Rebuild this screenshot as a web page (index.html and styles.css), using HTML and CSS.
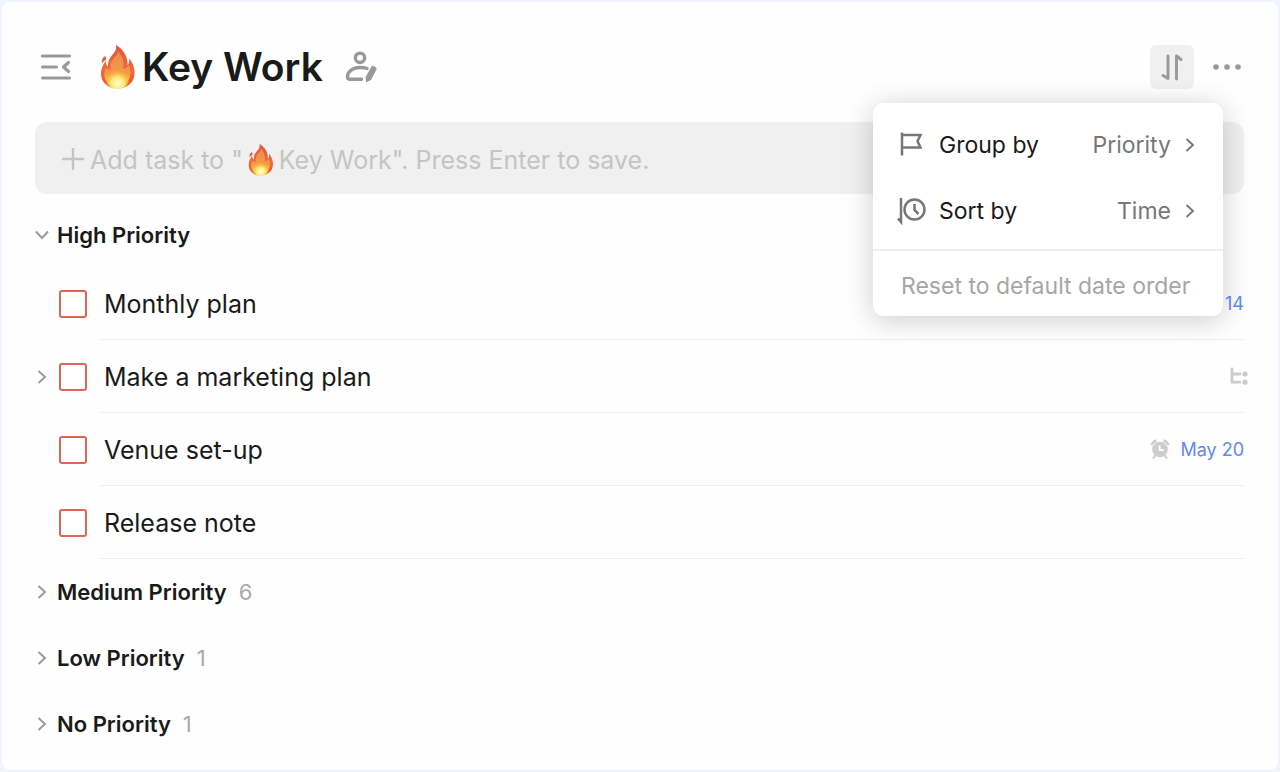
FILE: index.html
```
<!DOCTYPE html>
<html lang="en">
<head>
    <meta charset="UTF-8">
    <meta name="viewport" content="width=device-width, initial-scale=1">
    <title>Key Work</title>
    <link rel="stylesheet" href="styles.css">
</head>
<body>

<!-- Shared icons -->
<svg width="0" height="0" class="sprite" aria-hidden="true">
    <defs>
        <linearGradient id="flame-outer" x1="0" y1="0" x2="0" y2="1">
            <stop offset="0" stop-color="#e8543a"/>
            <stop offset="0.55" stop-color="#ef6a3c"/>
            <stop offset="0.85" stop-color="#ee5a2c"/>
            <stop offset="1" stop-color="#f59a3a"/>
        </linearGradient>
        <linearGradient id="flame-mid" x1="0" y1="0" x2="0" y2="1">
            <stop offset="0" stop-color="#ee8a50"/>
            <stop offset="0.6" stop-color="#f39a45"/>
            <stop offset="1" stop-color="#fbc93f"/>
        </linearGradient>
        <radialGradient id="flame-core" cx="0.5" cy="0.78" r="0.6">
            <stop offset="0" stop-color="#fffde0"/>
            <stop offset="0.45" stop-color="#fdec70"/>
            <stop offset="1" stop-color="#f8b040" stop-opacity="0"/>
        </radialGradient>
        <symbol id="flame" viewBox="0 0 36 44">
            <path fill="url(#flame-outer)" d="M16 0C23 4 28 11 27.500 20C29 18.500 29.500 16 29 13.500C32.500 17 35 23 34.500 29C34 38 27 43.500 17.500 43.500C8 43.500 1 37.500 1 28.500C1 23 3.500 19.500 5.500 16C6 19 6.500 20.500 8 21.500C8 15 10 12.500 13.500 8.500C16 5.500 16.500 3 16 0Z"/>
            <path fill="#ee5e3c" d="M5 11C6.500 12 7 14 5 15.500C3.500 16.700 2.500 17.500 2.500 18.500C1 15.500 2.500 13 5 11Z"/>
            <path fill="url(#flame-mid)" d="M17.500 6C22.500 11 24.500 17 23 23.500C25.500 24 27.500 22.500 28.500 20C30.500 24 31.500 29 29 34C27 39 23 42 17.500 42C11 42 5.500 38 4.500 32C4 28 4.500 25.500 6 23C7.500 24.500 9 25 11 24C9.500 19 12 15 15 12C17 10 18 8 17.500 6Z"/>
            <ellipse fill="url(#flame-core)" cx="17.500" cy="32" rx="12" ry="12"/>
        </symbol>
        <symbol id="chevron" viewBox="0 0 14 14">
            <path d="M3.500 1L10 7L3.500 13" fill="none" stroke="currentColor" stroke-width="1.900"/>
        </symbol>
    </defs>
</svg>

<main class="app">
    <header class="header">
        <button class="icon-btn" type="button" aria-label="Collapse sidebar">
            <svg width="32" height="28" viewBox="0 0 32 28" fill="none" stroke="currentColor" stroke-width="3.100" stroke-linecap="round">
                <path d="M2.500 3H29.500M2.500 14H16.500M2.500 25H29.500"/>
                <path d="M28.500 9.500L23.500 14L28.500 18.500" stroke-linejoin="round"/>
            </svg>
        </button>
        <h1 class="title"><svg class="title-flame"><use href="#flame"/></svg>Key Work</h1>
        <button class="icon-btn" type="button" aria-label="Share list">
            <svg width="32" height="32" viewBox="0 0 32 32" fill="none" stroke="currentColor" stroke-width="3.400" stroke-linejoin="round" stroke-linecap="round">
                <circle cx="15" cy="6.800" r="4.700"/>
                <path d="M22 17.500C20 16.700 18 16.500 15 16.500C8 16.500 2.500 20.500 2.500 25.500C2.500 28 3 28.300 5 28.300H16.500"/>
                <path d="M28.500 15L31 16.500Q32 17.500 31.500 18.500L26 29L21 31.500L20.700 26L26.500 15.500Q27.200 14.300 28.500 15Z" fill="currentColor" stroke="none"/>
            </svg>
        </button>

        <div class="header-actions">
            <div class="sort">
                <button class="sort-btn" type="button" aria-label="Group and sort" aria-expanded="true">
                    <svg width="22" height="28" viewBox="0 0 22 28" fill="none" stroke="currentColor" stroke-width="2.900" stroke-linecap="round" stroke-linejoin="round">
                        <path d="M7 3V25.500L2 22.500M15.500 26V3L20 6.500"/>
                    </svg>
                </button>

                <div class="menu">
                    <button class="menu-item" type="button">
                        <svg class="menu-icon" viewBox="0 0 30 28" fill="none" stroke="currentColor" stroke-width="2.500">
                            <path d="M5 1.500V24.500M5 4H23.500L20.500 10.200L23.500 16.500H5"/>
                        </svg>
                        <span>Group by</span>
                        <span class="menu-value">Priority</span>
                        <svg class="menu-chevron"><use href="#chevron"/></svg>
                    </button>
                    <button class="menu-item" type="button">
                        <svg class="menu-icon" viewBox="0 0 30 28" fill="none" stroke="currentColor" stroke-width="2.500">
                            <path d="M4 1V25L1 21.500"/>
                            <circle cx="17.500" cy="12.500" r="10"/>
                            <path d="M17.500 7V13L21.500 17"/>
                        </svg>
                        <span>Sort by</span>
                        <span class="menu-value">Time</span>
                        <svg class="menu-chevron"><use href="#chevron"/></svg>
                    </button>
                    <button class="menu-item menu-reset" type="button">Reset to default date order</button>
                </div>
            </div>
            <button class="icon-btn" type="button" aria-label="More">
                <svg width="30" height="8" viewBox="0 0 30 8" fill="currentColor">
                    <circle cx="4" cy="4" r="2.800"/><circle cx="15" cy="4" r="2.800"/><circle cx="26" cy="4" r="2.800"/>
                </svg>
            </button>
        </div>
    </header>

    <div class="add-task">
        <input class="add-input" id="new-task" type="text" placeholder=" ">
        <label class="add-hint" for="new-task">
            <svg class="plus" viewBox="0 0 22 22" fill="none" stroke="currentColor" stroke-width="2.400">
                <path d="M0 10H22M11 -1V21"/>
            </svg>
            <span>Add task to "</span>
            <svg class="hint-flame"><use href="#flame"/></svg>
            <span>Key Work". Press Enter to save.</span>
        </label>
    </div>

    <section>
        <button class="group open" type="button" aria-expanded="true">
            <svg class="chevron"><use href="#chevron"/></svg>
            <span>High Priority</span>
        </button>
        <ul class="tasks">
            <li class="task">
                <span class="toggle"></span>
                <input class="check" type="checkbox" id="task-1">
                <div class="task-body">
                    <label for="task-1">Monthly plan</label>
                    <span class="date">14</span>
                </div>
            </li>
            <li class="task">
                <button class="toggle" type="button" aria-label="Show subtasks"><svg class="chevron"><use href="#chevron"/></svg></button>
                <input class="check" type="checkbox" id="task-2">
                <div class="task-body">
                    <label for="task-2">Make a marketing plan</label>
                    <svg class="meta-icon subtasks-icon" viewBox="0 0 20 20" fill="none" stroke="currentColor" stroke-width="2.800" stroke-linecap="round">
                        <path d="M3 3V16.200H11M3 8H11"/>
                        <circle cx="16" cy="8" r="2.600" fill="currentColor" stroke="none"/>
                        <circle cx="16" cy="16.200" r="2.600" fill="currentColor" stroke="none"/>
                    </svg>
                </div>
            </li>
            <li class="task">
                <span class="toggle"></span>
                <input class="check" type="checkbox" id="task-3">
                <div class="task-body">
                    <label for="task-3">Venue set-up</label>
                    <svg class="meta-icon" viewBox="0 0 20 20">
                        <path d="M5.500 16L3.500 19M14.500 16L16.500 19" stroke="currentColor" stroke-width="2" stroke-linecap="round"/>
                        <path d="M1.500 6A8 8 0 0 1 6.500 1.500M13.500 1.500A8 8 0 0 1 18.500 6" stroke="currentColor" stroke-width="2.400" fill="none"/>
                        <circle cx="10" cy="10.500" r="7.800" fill="currentColor"/>
                        <path d="M9.700 6.500V11H13.500" fill="none" stroke="#fff" stroke-width="1.800"/>
                    </svg>
                    <span class="date">May 20</span>
                </div>
            </li>
            <li class="task">
                <span class="toggle"></span>
                <input class="check" type="checkbox" id="task-4">
                <div class="task-body">
                    <label for="task-4">Release note</label>
                </div>
            </li>
        </ul>
    </section>

    <button class="group" type="button" aria-expanded="false">
        <svg class="chevron"><use href="#chevron"/></svg>
        <span>Medium Priority</span>
        <span class="count">6</span>
    </button>
    <button class="group" type="button" aria-expanded="false">
        <svg class="chevron"><use href="#chevron"/></svg>
        <span>Low Priority</span>
        <span class="count">1</span>
    </button>
    <button class="group" type="button" aria-expanded="false">
        <svg class="chevron"><use href="#chevron"/></svg>
        <span>No Priority</span>
        <span class="count">1</span>
    </button>
</main>

</body>
</html>
```

FILE: styles.css
```
* {
    box-sizing: border-box;
}

body {
    margin: 0;
    background-color: #f1f4ff;
    color: #1a1a1a;
    font-family: Inter, "Liberation Sans", sans-serif;
    font-size: 25px;
}

button,
input {
    font: inherit;
    color: inherit;
}

button {
    padding: 0;
    border: none;
    background: none;
    text-align: left;
    cursor: pointer;
}

svg {
    display: block;
    flex: none;
}

.sprite {
    position: absolute;
}

.app {
    min-height: 100vh;
    padding: 43px 34px 8px 33px;
    border: 2px solid #f1f4ff;
    border-radius: 10px;
    background-color: #fefefe;
}

/* Header */
.header {
    display: flex;
    align-items: center;
    height: 44px;
    margin-bottom: 33px;
    padding: 0 2px 0 5px;
}

.icon-btn {
    color: #999;
}

.title {
    display: flex;
    align-items: center;
    gap: 6px;
    margin: 0 22px 0 28px;
    font-size: 39px;
    font-weight: 600;
    line-height: 44px;
}

.title-flame {
    width: 36px;
    height: 44px;
}

.header-actions {
    display: flex;
    align-items: center;
    gap: 18px;
    margin-left: auto;
}

.sort {
    position: relative;
}

.sort-btn {
    display: flex;
    align-items: center;
    justify-content: center;
    width: 44px;
    height: 44px;
    border-radius: 6px;
    background-color: #f0f0f0;
    color: #999;
}

/* Sort menu */
.menu {
    position: absolute;
    top: 58px;
    right: -29px;
    z-index: 1;
    width: 350px;
    padding-top: 9px;
    border-radius: 10px;
    background-color: #fff;
    box-shadow: 0 4px 28px rgba(0, 0, 0, 0.2);
    font-size: 23px;
}

.menu-item {
    display: flex;
    align-items: center;
    width: 100%;
    height: 66px;
    padding: 0 26px 0 24px;
    white-space: nowrap;
}

.menu-icon {
    width: 30px;
    height: 28px;
    margin-right: 12px;
    color: #777;
}

.menu-value {
    margin-left: auto;
    color: #777;
}

.menu-chevron {
    width: 14px;
    height: 14px;
    margin-left: 12px;
    color: #777;
}

.menu-reset {
    height: 67px;
    margin-top: 5px;
    padding: 4px 28px 0;
    border-top: 2px solid #eee;
    color: #a6a6a6;
}

/* New task field */
.add-task {
    display: grid;
    height: 72px;
    margin-bottom: 9px;
    border-radius: 12px;
    background-color: #f0f0f0;
}

.add-input,
.add-hint {
    grid-area: 1 / 1;
}

.add-input {
    width: 100%;
    padding: 0 27px;
    border: none;
    border-radius: 12px;
    background: none;
    outline: none;
}

.add-hint {
    display: flex;
    align-items: center;
    padding: 3px 27px 0;
    color: #c4c4c4;
    white-space: nowrap;
    cursor: text;
}

.add-input:not(:placeholder-shown) + .add-hint {
    visibility: hidden;
}

.plus {
    width: 22px;
    height: 22px;
    margin-right: 6px;
    overflow: visible;
}

.hint-flame {
    width: 26px;
    height: 32px;
    margin: 0 5px;
}

/* Priority groups */
.group {
    display: flex;
    align-items: center;
    gap: 8px;
    width: 100%;
    height: 66px;
    font-size: 22px;
    font-weight: 600;
}

.group.open {
    height: 64px;
}

.chevron {
    width: 14px;
    height: 14px;
    color: #999;
}

.open .chevron {
    transform: rotate(90deg);
}

.count {
    margin-left: 4px;
    color: #aaa;
    font-weight: 400;
}

/* Tasks */
.tasks {
    margin: 0;
    padding: 0;
    list-style: none;
}

.task {
    display: flex;
    align-items: center;
    height: 73px;
}

.toggle {
    width: 14px;
    margin-right: 10px;
}

.check {
    appearance: none;
    flex: none;
    width: 28px;
    height: 28px;
    margin: 0 13px 0 0;
    border: 2px solid #df6555;
    border-radius: 3px;
    background-color: #fff;
}

.check:checked {
    background-color: #df6555;
}

.task-body {
    display: flex;
    flex: 1;
    align-items: center;
    gap: 10px;
    height: 100%;
    padding-left: 4px;
    border-bottom: 1px solid #f0f0f0;
}

.task-body label {
    margin-right: auto;
    padding-top: 2px;
}

.meta-icon {
    width: 20px;
    height: 20px;
    color: #ccc;
}

.subtasks-icon {
    margin-right: -5px;
}

.date {
    color: #6189f2;
    font-size: 18px;
}
```
